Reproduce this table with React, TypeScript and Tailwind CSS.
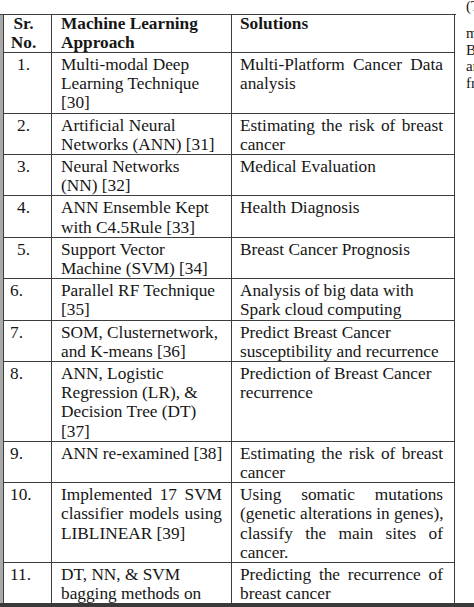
import React from 'react';

type Line = { t: string; j?: boolean };
type Row = { n: string; indent?: boolean; a: Line[]; s: Line[] };

const rows: Row[] = [
  {
    n: '1.',
    indent: true,
    a: [{ t: 'Multi-modal Deep' }, { t: 'Learning Technique' }, { t: '[30]' }],
    s: [{ t: 'Multi-Platform Cancer Data', j: true }, { t: 'analysis' }],
  },
  {
    n: '2.',
    indent: true,
    a: [{ t: 'Artificial Neural' }, { t: 'Networks (ANN) [31]' }],
    s: [{ t: 'Estimating the risk of breast', j: true }, { t: 'cancer' }],
  },
  {
    n: '3.',
    indent: true,
    a: [{ t: 'Neural Networks' }, { t: '(NN) [32]' }],
    s: [{ t: 'Medical Evaluation' }],
  },
  {
    n: '4.',
    indent: true,
    a: [{ t: 'ANN Ensemble Kept' }, { t: 'with C4.5Rule [33]' }],
    s: [{ t: 'Health Diagnosis' }],
  },
  {
    n: '5.',
    indent: true,
    a: [{ t: 'Support Vector' }, { t: 'Machine (SVM) [34]' }],
    s: [{ t: 'Breast Cancer Prognosis' }],
  },
  {
    n: '6.',
    a: [{ t: 'Parallel RF Technique' }, { t: '[35]' }],
    s: [{ t: 'Analysis of big data with' }, { t: 'Spark cloud computing' }],
  },
  {
    n: '7.',
    a: [{ t: 'SOM, Clusternetwork,' }, { t: 'and K-means [36]' }],
    s: [{ t: 'Predict Breast Cancer' }, { t: 'susceptibility and recurrence' }],
  },
  {
    n: '8.',
    a: [
      { t: 'ANN, Logistic' },
      { t: 'Regression (LR), &' },
      { t: 'Decision Tree (DT)' },
      { t: '[37]' },
    ],
    s: [{ t: 'Prediction of Breast Cancer' }, { t: 'recurrence' }],
  },
  {
    n: '9.',
    a: [{ t: 'ANN re-examined [38]' }],
    s: [{ t: 'Estimating the risk of breast', j: true }, { t: 'cancer' }],
  },
  {
    n: '10.',
    a: [
      { t: 'Implemented 17 SVM', j: true },
      { t: 'classifier models using', j: true },
      { t: 'LIBLINEAR [39]' },
    ],
    s: [
      { t: 'Using somatic mutations', j: true },
      { t: '(genetic alterations in genes),', j: true },
      { t: 'classify the main sites of', j: true },
      { t: 'cancer.' },
    ],
  },
  {
    n: '11.',
    a: [{ t: 'DT, NN, & SVM' }, { t: 'bagging methods on' }],
    s: [{ t: 'Predicting the recurrence of', j: true }, { t: 'breast cancer' }],
  },
];

function Lines({ lines }: { lines: Line[] }) {
  return (
    <>
      {lines.map((l, i) => (
        <div
          key={i}
          className={l.j ? 'whitespace-nowrap text-justify [text-align-last:justify]' : 'whitespace-nowrap'}
        >
          {l.t}
        </div>
      ))}
    </>
  );
}

export default function App() {
  const cell = 'border border-[#3d3d3d] align-top pt-[2px]';
  const head = 'border border-[#3d3d3d] align-top leading-[18.5px]';

  return (
    <div
      className="flex h-[607px] w-[474px] flex-col overflow-hidden bg-white text-[#161616]"
      style={{ fontFamily: '"Liberation Serif", "Times New Roman", serif' }}
    >
      <div className="flex min-h-0 flex-1 overflow-hidden">
        {/* table column */}
        <div className="flex w-[456px] shrink-0 flex-col pt-[14px]">
          <div className="flex min-h-0 flex-1 border-t border-[#3d3d3d]">
            <div className="w-[3px] shrink-0 bg-[#a9a9a9]" />
            <table className="-mt-px w-[452px] table-fixed border-collapse self-start text-[17.3px] leading-[19.2px]">
              <colgroup>
                <col className="w-[48px]" />
                <col className="w-[180px]" />
                <col />
              </colgroup>
              <thead>
                <tr className="font-bold">
                  <th className={`${head} pr-[8px] text-center`}>
                    <div>Sr.</div>
                    <div>No.</div>
                  </th>
                  <th className={`${head} pl-[9px] text-left`}>
                    <div>Machine Learning</div>
                    <div>Approach</div>
                  </th>
                  <th className={`${head} pl-[8px] text-left`}>Solutions</th>
                </tr>
              </thead>
              <tbody>
                {rows.map((r) => (
                  <tr key={r.n}>
                    <td className={`${cell} ${r.indent ? 'pl-[13px]' : 'pl-[6px]'}`}>{r.n}</td>
                    <td className={`${cell} pl-[9px] pr-[9px]`}>
                      <Lines lines={r.a} />
                    </td>
                    <td className={`${cell} pl-[8px] pr-[11px]`}>
                      <Lines lines={r.s} />
                    </td>
                  </tr>
                ))}
              </tbody>
            </table>
          </div>
        </div>

        {/* neighbouring column, cut off at the edge */}
        <div className="ml-[10px] w-[8px] overflow-hidden whitespace-nowrap text-[15px] leading-[16.4px]">
          <div className="-mt-[2px]">(Table 2)</div>
          <div className="mt-[11px]">
            <div>models</div>
            <div>Breast</div>
            <div>analysis</div>
            <div>from</div>
          </div>
        </div>
      </div>
      <div className="h-[4px] shrink-0 bg-[#3a3a3a]" />
    </div>
  );
}
